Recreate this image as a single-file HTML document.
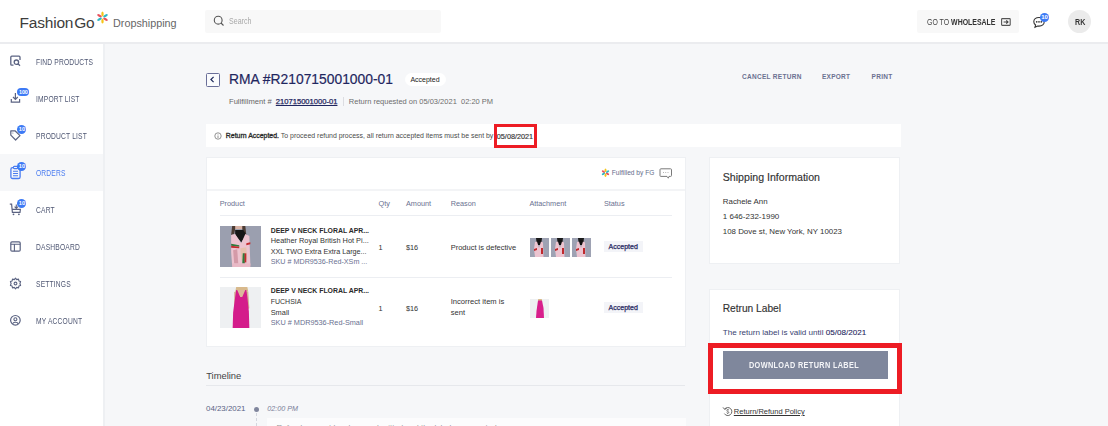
<!DOCTYPE html>
<html><head><meta charset="utf-8">
<style>
*{margin:0;padding:0;box-sizing:border-box}
html,body{width:1108px;height:426px;overflow:hidden;background:#f6f7f9;font-family:"Liberation Sans",sans-serif}
.a{position:absolute;white-space:nowrap;line-height:1}
#hdr{position:absolute;left:0;top:0;width:1108px;height:44px;background:#fff;border-bottom:2px solid #ebecef}
#side{position:absolute;left:0;top:44px;width:105px;height:382px;background:#fff;border-right:2px solid #eef0f3}
.nav{color:#4f5773;font-size:8.4px;left:35.5px;transform:scaleX(0.8);transform-origin:0 0;letter-spacing:0.2px}
.ico{position:absolute}
.badge{position:absolute;background:#3d7af5;color:#fff;font-size:6px;font-weight:bold;border-radius:5px;text-align:center;line-height:9px;height:9px}
.card{position:absolute;background:#fff;border:1px solid #eef0f3}
.th{color:#6a7191;font-size:7.3px}
.td{color:#333;font-size:7.3px}
</style></head><body>
<div id="hdr"></div>
<!-- logo -->
<div class="a" style="left:19.5px;top:14.5px;font-size:15.5px;color:#3d3d3d;letter-spacing:-0.2px">Fashion<span style="margin-left:1px">Go</span></div>
<svg class="ico" style="left:96px;top:11px" width="13" height="13" viewBox="0 0 13 13">
<ellipse cx="6.5" cy="3" rx="1.2" ry="2.6" fill="#f5c518"/>
<ellipse cx="6.5" cy="10" rx="1.2" ry="2.6" fill="#f5c518"/>
<ellipse cx="3.5" cy="4.8" rx="1.2" ry="2.6" fill="#e8505b" transform="rotate(-60 3.5 4.8)"/>
<ellipse cx="9.5" cy="8.2" rx="1.2" ry="2.6" fill="#e8505b" transform="rotate(-60 9.5 8.2)"/>
<ellipse cx="9.5" cy="4.8" rx="1.2" ry="2.6" fill="#2fb8c5" transform="rotate(60 9.5 4.8)"/>
<ellipse cx="3.5" cy="8.2" rx="1.2" ry="2.6" fill="#2fb8c5" transform="rotate(60 3.5 8.2)"/>
</svg>
<div class="a" style="left:113px;top:18px;font-size:10.8px;color:#666">Dropshipping</div>
<!-- search -->
<div class="a" style="left:205px;top:10px;width:236px;height:23px;background:#f8f8f8;border-radius:2px"></div>
<svg class="ico" style="left:213px;top:15px" width="12" height="12" viewBox="0 0 12 12"><circle cx="5.2" cy="5.2" r="3.9" fill="none" stroke="#555" stroke-width="1.1"/><path d="M8 8 L10.5 10.5" stroke="#555" stroke-width="1.1"/></svg>
<div class="a" style="left:228.5px;top:17px;font-size:8.6px;color:#a8a8a8;transform:scaleX(0.825);transform-origin:0 0">Search</div>
<!-- wholesale -->
<div class="a" style="left:917px;top:10px;width:102px;height:23px;background:#f8f8f8;border-radius:2px"></div>
<div class="a" style="left:926.8px;top:17.5px;font-size:8.4px;color:#444;transform:scaleX(0.83);transform-origin:0 0">GO TO <b style="color:#333">WHOLESALE</b></div>
<svg class="ico" style="left:1000px;top:17px" width="12" height="10" viewBox="0 0 12 10"><rect x="1.6" y="1.6" width="8.6" height="6.8" rx="0.6" fill="none" stroke="#555" stroke-width="1.1"/><path d="M3.6 5 H8 M6.3 3.4 L8 5 L6.3 6.6" fill="none" stroke="#444" stroke-width="1.1"/></svg>
<!-- chat -->
<svg class="ico" style="left:1032px;top:15px" width="14" height="14" viewBox="0 0 14 14"><path d="M7 2.5 C3.8 2.5 1.8 4.5 1.8 6.8 C1.8 8.2 2.5 9.3 3.6 10 L3 12.2 L5.6 11 C6.1 11.1 6.5 11.1 7 11.1 C10.2 11.1 12.2 9.1 12.2 6.8 C12.2 4.5 10.2 2.5 7 2.5 Z" fill="none" stroke="#333" stroke-width="1.1"/><circle cx="4.7" cy="6.8" r="0.85" fill="#333"/><circle cx="7" cy="6.8" r="0.85" fill="#333"/><circle cx="9.3" cy="6.8" r="0.85" fill="#333"/></svg>
<div class="badge" style="left:1040px;top:12.5px;width:9px">10</div>
<!-- avatar -->
<div class="a" style="left:1068px;top:10px;width:23px;height:23px;border-radius:50%;background:#ebebeb"></div>
<div class="a" style="left:1074.5px;top:18px;font-size:8.4px;font-weight:bold;color:#333;transform:scaleX(0.85);transform-origin:0 0">RK</div>

<!-- sidebar -->
<div id="side"></div>
<div class="a" style="left:0;top:154px;width:103px;height:37px;background:#f6f7f9"></div>
<div class="a nav" style="top:57.7px">FIND PRODUCTS</div>
<div class="a nav" style="top:94.8px">IMPORT LIST</div>
<div class="a nav" style="top:131.9px">PRODUCT LIST</div>
<div class="a nav" style="top:169.0px;color:#4a7cf0">ORDERS</div>
<div class="a nav" style="top:206.1px">CART</div>
<div class="a nav" style="top:243.2px">DASHBOARD</div>
<div class="a nav" style="top:280.3px">SETTINGS</div>
<div class="a nav" style="top:317.4px">MY ACCOUNT</div>


<!-- sidebar icons -->
<svg class="ico" style="left:9px;top:55px" width="13" height="12" viewBox="0 0 13 12">
<path d="M4.5 10.2 H2.8 Q1.8 10.2 1.8 9.2 V2.2 Q1.8 1.2 2.8 1.2 H10 Q11 1.2 11 2.2 V5" fill="none" stroke="#5b6382" stroke-width="1.3"/>
<circle cx="7.4" cy="7.2" r="2.2" fill="none" stroke="#5b6382" stroke-width="1.3"/>
<path d="M9 8.8 L11 10.8" stroke="#5b6382" stroke-width="1.3"/>
</svg>
<svg class="ico" style="left:9px;top:92px" width="13" height="12" viewBox="0 0 13 12">
<path d="M6.4 1 V7.3 M4 5 L6.4 7.4 L8.8 5" fill="none" stroke="#5b6382" stroke-width="1.2"/>
<path d="M2.3 7 V10.2 H10.6 V7" fill="none" stroke="#5b6382" stroke-width="1.2"/>
</svg>
<div class="badge" style="left:17.3px;top:88.3px;width:12px;height:8.2px;line-height:8.2px;border-radius:4.1px;font-size:5.4px;letter-spacing:-0.2px">100</div>
<svg class="ico" style="left:9px;top:129px" width="13" height="12" viewBox="0 0 13 12">
<path d="M1.8 1.8 H6 L11 6.6 L6.6 11 L1.8 6.2 Z" fill="none" stroke="#5b6382" stroke-width="1.2" stroke-linejoin="round"/>
<circle cx="3.9" cy="3.9" r="0.5" fill="#5b6382"/>
</svg>
<div class="badge" style="left:17.3px;top:124.5px;width:9.2px;height:9.2px;line-height:9.2px;font-size:5.6px">10</div>
<svg class="ico" style="left:9px;top:165px" width="13" height="15" viewBox="0 0 13 15">
<rect x="1.9" y="2.6" width="9.2" height="10.9" rx="1.6" fill="none" stroke="#4a7cf0" stroke-width="1.3"/>
<rect x="4.5" y="1.4" width="4" height="2.2" rx="0.6" fill="#f6f7f9" stroke="#4a7cf0" stroke-width="1.1"/>
<path d="M4 6.3 H9 M4 8.5 H9 M4 10.7 H9" stroke="#4a7cf0" stroke-width="1.1"/>
</svg>
<div class="badge" style="left:17.3px;top:161.5px;width:9.2px;height:9.2px;line-height:9.2px;font-size:5.6px">10</div>
<svg class="ico" style="left:9px;top:203px" width="13" height="13" viewBox="0 0 13 13">
<path d="M0.8 1.2 H2.6 L3.4 9.3 H11 L11.4 6.3 H3.2" fill="none" stroke="#5b6382" stroke-width="1.2"/>
<path d="M7.3 1.5 V5.3 M5.6 3.7 L7.3 5.4 L9 3.7" fill="none" stroke="#5b6382" stroke-width="1.1"/>
<circle cx="4.5" cy="11.3" r="0.9" fill="#5b6382"/><circle cx="9.9" cy="11.3" r="0.9" fill="#5b6382"/>
</svg>
<div class="badge" style="left:17.3px;top:199px;width:9.2px;height:9.2px;line-height:9.2px;font-size:5.6px">10</div>
<svg class="ico" style="left:9px;top:240px" width="13" height="13" viewBox="0 0 13 13">
<rect x="1.8" y="1.8" width="9.4" height="9.4" rx="1.2" fill="none" stroke="#5b6382" stroke-width="1.2"/>
<path d="M1.8 4.3 H11.2 M5.4 4.3 V11.2" stroke="#5b6382" stroke-width="1.1"/>
</svg>
<svg class="ico" style="left:9px;top:277px" width="13" height="13" viewBox="0 0 13 13">
<path d="M6.5 1.2 L7.7 2.6 L9.5 2.1 L9.9 3.9 L11.6 4.6 L10.9 6.5 L11.6 8.4 L9.9 9.1 L9.5 10.9 L7.7 10.4 L6.5 11.8 L5.3 10.4 L3.5 10.9 L3.1 9.1 L1.4 8.4 L2.1 6.5 L1.4 4.6 L3.1 3.9 L3.5 2.1 L5.3 2.6 Z" fill="none" stroke="#5b6382" stroke-width="1.1" stroke-linejoin="round"/>
<circle cx="6.5" cy="6.5" r="1.4" fill="none" stroke="#5b6382" stroke-width="1.1"/>
</svg>
<svg class="ico" style="left:9px;top:314px" width="13" height="13" viewBox="0 0 13 13">
<circle cx="6.4" cy="6.3" r="4.8" fill="none" stroke="#5b6382" stroke-width="1.2"/>
<circle cx="6.4" cy="5.2" r="1.5" fill="none" stroke="#5b6382" stroke-width="1.1"/>
<path d="M3.6 10 Q4 8.2 6.4 8.2 Q8.8 8.2 9.2 10" fill="none" stroke="#5b6382" stroke-width="1.1"/>
</svg>

<!-- main header -->
<div class="a" style="left:205.5px;top:72.5px;width:14px;height:14px;border:1px solid #6a6f99;border-radius:1.5px;background:#fafbfd"></div>
<svg class="ico" style="left:206px;top:73px" width="13" height="13" viewBox="0 0 13 13"><path d="M7.6 3.8 L4.9 6.5 L7.6 9.2" fill="none" stroke="#1f2a5c" stroke-width="1.2"/></svg>
<div class="a" style="left:229px;top:73px;font-size:13.85px;color:#1f2660;-webkit-text-stroke:0.18px #1f2660">RMA #R210715001000-01</div>
<div class="a" style="left:404.5px;top:73px;width:41px;height:13px;border-radius:6.5px;background:#fff"></div>
<div class="a" style="left:410.4px;top:76px;font-size:7px;color:#222">Accepted</div>
<div class="a" style="left:229px;top:97.5px;font-size:7.6px;color:#666">Fullfillment #</div><div class="a" style="left:275.8px;top:97.5px;font-size:7.6px;color:#1f2660;text-decoration:underline;-webkit-text-stroke:0.25px #1f2660">210715001000-01</div><div class="a" style="left:343px;top:96.5px;width:0.8px;height:9px;background:#dcdde2"></div><div class="a" style="left:348.8px;top:97.5px;font-size:7.5px;color:#6e6e6e">Return requested on 05/03/2021&nbsp; 02:20 PM</div>
<div class="a" style="left:742px;top:74px;font-size:6.5px;font-weight:bold;color:#6b7191;letter-spacing:0.3px">CANCEL RETURN</div>
<div class="a" style="left:822px;top:74px;font-size:6.5px;font-weight:bold;color:#6b7191;letter-spacing:0.25px">EXPORT</div>
<div class="a" style="left:871.5px;top:74px;font-size:6.5px;font-weight:bold;color:#6b7191;letter-spacing:0.3px">PRINT</div>

<!-- alert -->
<div class="a" style="left:206px;top:124px;width:695px;height:23px;background:#fff"></div>
<svg class="ico" style="left:214px;top:132px" width="8" height="8" viewBox="0 0 8 8"><circle cx="4" cy="4" r="3.2" fill="none" stroke="#777" stroke-width="0.8"/><path d="M4 3.5 V6" stroke="#777" stroke-width="0.8"/><circle cx="4" cy="2.4" r="0.45" fill="#777"/></svg>
<div class="a" style="left:225.8px;top:133px;font-size:6.94px;color:#4a4a4a"><span style="color:#2a2a2a;-webkit-text-stroke:0.3px #2a2a2a">Return Accepted.</span> To proceed refund process, all return accepted items must be sent by</div><div class="a" style="left:496.8px;top:132.5px;font-size:7.25px;color:#333;-webkit-text-stroke:0.15px #333">05/08/2021</div>
<div class="a" style="left:494px;top:124px;width:43px;height:24px;border:3px solid #ed1c24"></div>


<!-- table card -->
<div class="card" style="left:206px;top:157px;width:480px;height:190px"></div>
<div class="a" style="left:207px;top:189px;width:478px;height:1.5px;background:#f3f4f6"></div>
<svg class="ico" style="left:600.5px;top:168.3px" width="9" height="9.5" viewBox="0 0 13 13">
<ellipse cx="6.5" cy="3" rx="1.4" ry="2.6" fill="#f5c518"/>
<ellipse cx="6.5" cy="10" rx="1.4" ry="2.6" fill="#f5c518"/>
<ellipse cx="3.5" cy="4.8" rx="1.4" ry="2.6" fill="#e8505b" transform="rotate(-60 3.5 4.8)"/>
<ellipse cx="9.5" cy="8.2" rx="1.4" ry="2.6" fill="#e8505b" transform="rotate(-60 9.5 8.2)"/>
<ellipse cx="9.5" cy="4.8" rx="1.4" ry="2.6" fill="#2fb8c5" transform="rotate(60 9.5 4.8)"/>
<ellipse cx="3.5" cy="8.2" rx="1.4" ry="2.6" fill="#2fb8c5" transform="rotate(60 3.5 8.2)"/>
</svg>
<div class="a" style="left:611.8px;top:170px;font-size:6.6px;color:#666d8a">Fulfilled by FG</div>
<svg class="ico" style="left:658px;top:167px" width="15" height="13" viewBox="0 0 15 13"><path d="M2.8 1.8 H12.6 Q13.5 1.8 13.5 2.7 V8.6 Q13.5 9.4 12.6 9.4 H11 L10.3 11.2 L9 9.4 H2.8 Q2 9.4 2 8.6 V2.7 Q2 1.8 2.8 1.8 Z" fill="none" stroke="#7a7a7a" stroke-width="1"/><circle cx="5.6" cy="5.4" r="0.45" fill="#555"/><circle cx="7.8" cy="5.4" r="0.45" fill="#555"/><circle cx="10" cy="5.4" r="0.45" fill="#555"/></svg>

<div class="a th" style="left:219.7px;top:200px">Product</div>
<div class="a th" style="left:378.6px;top:200px">Qty</div>
<div class="a th" style="left:406px;top:200px">Amount</div>
<div class="a th" style="left:450.7px;top:200px">Reason</div>
<div class="a th" style="left:529.4px;top:200px">Attachment</div>
<div class="a th" style="left:603.9px;top:200px">Status</div>
<div class="a" style="left:219.5px;top:215px;width:452px;height:1px;background:#eceef2"></div>
<div class="a" style="left:219.5px;top:276.5px;width:452px;height:1px;background:#eceef2"></div>

<!-- row1 -->
<svg class="ico" style="left:219.5px;top:225.5px" width="41.5" height="41.5" viewBox="0 0 41 41">
<defs><filter id="bl" x="-10%" y="-10%" width="120%" height="120%"><feGaussianBlur stdDeviation="0.5"/></filter></defs>
<rect width="41" height="41" fill="#9b9faf"/>
<g filter="url(#bl)">
<path d="M12 0 H25 L26 9 L23 8 L22 3 H15 L14 8 L11 9 Z" fill="#4b3a33"/>
<rect x="15" y="0" width="7" height="3" fill="#d9b3a5"/>
<path d="M15 4 H23 L26 9 L21 16 L15 9 Z" fill="#141414"/>
<path d="M11 9 L15 8 L21 17 L25 8 L29 10 L30 39 L12 39 L11 26 Z" fill="#ecc3cf"/>
<path d="M13 24 L17 23 L18 37 L14 37 Z" fill="#d49aa8"/>
<path d="M11 17.5 L19 19 L19 20.5 L11 19.5 Z" fill="#2e7b3c"/>
<path d="M11 19.5 L19 20.5 L19 22 L11 21.5 Z" fill="#c42a2e"/>
<path d="M26 17 L30 16 L30 18 L26 19 Z" fill="#c42a2e"/>
<path d="M20 22 L26 21 L27 33 L21 34 Z" fill="#e6c0ad"/>
<path d="M22.5 27 L24.5 27 L24.5 37 L22 37 Z" fill="#2e7b3c"/>
<path d="M24.3 27 L26 27 L26 36 L24.3 36 Z" fill="#c42a2e"/>
<rect x="12" y="37" width="18" height="4" fill="#e9b9c6"/>
</g>
</svg>
<div class="a td" style="left:270.7px;top:228px;font-weight:bold;color:#2a2a2a;font-size:6.9px">DEEP V NECK FLORAL APR...</div>
<div class="a td" style="left:270.7px;top:237px;font-size:7.4px">Heather Royal British Hot Pi...</div>
<div class="a td" style="left:270.7px;top:248px;font-size:7.2px">XXL TWO Extra Extra Large...</div>
<div class="a td" style="left:270.7px;top:258px;color:#6a7191;font-size:7.2px">SKU # MDR9536-Red-XSm ...</div>
<div class="a td" style="left:378.6px;top:244px">1</div>
<div class="a td" style="left:406px;top:244px">$16</div>
<div class="a td" style="left:450.7px;top:243.5px;font-size:7.5px">Product is defective</div>
<svg class="ico" style="left:529.5px;top:237.5px" width="19" height="19" viewBox="0 0 19 19" id="th1">
<rect width="19" height="19" fill="#9ea2b3"/>
<path d="M6 0 H12 L11.5 4 H6.5 Z" fill="#1a1a1a"/>
<path d="M6.5 3 Q9 1 11.5 3 L11 7 H7 Z" fill="#111"/>
<path d="M5 4 L7 3.5 L9 10 L11 3.5 L13 4.5 L13.5 19 L5 19 L4 11 Z" fill="#ecc4d0"/>
<path d="M4 11 L7 10 L7 12 L4 13 Z" fill="#c0282d"/>
<path d="M11 10 L13 10 L13 16 L11 16 Z" fill="#c0282d"/>
</svg>
<svg class="ico" style="left:550.5px;top:237.5px" width="19" height="19" viewBox="0 0 19 19"><use href="#th1"/>
<rect width="19" height="19" fill="#9ea2b3"/>
<path d="M6 0 H12 L11.5 4 H6.5 Z" fill="#1a1a1a"/>
<path d="M6.5 3 Q9 1 11.5 3 L11 7 H7 Z" fill="#111"/>
<path d="M5 4 L7 3.5 L9 10 L11 3.5 L13 4.5 L13.5 19 L5 19 L4 11 Z" fill="#ecc4d0"/>
<path d="M4 11 L7 10 L7 12 L4 13 Z" fill="#c0282d"/>
<path d="M11 10 L13 10 L13 16 L11 16 Z" fill="#c0282d"/>
</svg>
<svg class="ico" style="left:571.5px;top:237.5px" width="19" height="19" viewBox="0 0 19 19">
<rect width="19" height="19" fill="#9ea2b3"/>
<path d="M6 0 H12 L11.5 4 H6.5 Z" fill="#1a1a1a"/>
<path d="M6.5 3 Q9 1 11.5 3 L11 7 H7 Z" fill="#111"/>
<path d="M5 4 L7 3.5 L9 10 L11 3.5 L13 4.5 L13.5 19 L5 19 L4 11 Z" fill="#ecc4d0"/>
<path d="M4 11 L7 10 L7 12 L4 13 Z" fill="#c0282d"/>
<path d="M11 10 L13 10 L13 16 L11 16 Z" fill="#c0282d"/>
</svg>
<div class="a" style="left:603.6px;top:241px;width:39.6px;height:10.5px;background:#f3f4f8"></div>
<div class="a" style="left:608.6px;top:243px;font-size:7px;color:#1f2660;-webkit-text-stroke:0.25px #1f2660">Accepted</div>

<!-- row2 -->
<svg class="ico" style="left:219.5px;top:286.5px" width="41.5" height="41.5" viewBox="0 0 41 41">
<rect width="41" height="41" fill="#eef0f2"/>
<g filter="url(#bl)">
<path d="M16 0 H27 L28 5 L25 4 L18 4 L15 5 Z" fill="#d8b98c"/><rect x="16" y="3" width="10" height="8" fill="#dcb89c"/>
<path d="M14 5 L17 4 L16 20 L14 21 Z" fill="#d4b095"/>
<path d="M25 4 L28 5 L29 21 L27 22 Z" fill="#d4b095"/>
<path d="M16 3 L17 3 L20 10 L22 10 L25 3 L26 3 L27 10 L28.5 24 L29 41 L12.5 41 L13 25 L15 10 Z" fill="#d41a8b"/>
</g>
</svg>
<div class="a td" style="left:270.7px;top:288px;font-weight:bold;color:#2a2a2a;font-size:6.9px">DEEP V NECK FLORAL APR...</div>
<div class="a td" style="left:270.7px;top:298px;font-size:7px">FUCHSIA</div>
<div class="a td" style="left:270.7px;top:308.5px;font-size:7.4px">Small</div>
<div class="a td" style="left:270.7px;top:318.5px;color:#6a7191">SKU # MDR9536-Red-Small</div>
<div class="a td" style="left:378.6px;top:305px">1</div>
<div class="a td" style="left:406px;top:305px">$16</div>
<div class="a td" style="left:450.7px;top:298px;font-size:7.6px">Incorrect item is</div>
<div class="a td" style="left:450.7px;top:308.5px;font-size:7.6px">sent</div>
<svg class="ico" style="left:529.5px;top:298.5px" width="19" height="19" viewBox="0 0 19 19">
<rect width="19" height="19" fill="#eef0f2"/>
<ellipse cx="10" cy="1" rx="2" ry="1.5" fill="#d9b98a"/>
<path d="M8 1.5 L12 1.5 L13.5 9 L14 19 L6 19 L6.5 12 Z" fill="#d81f8c"/>
</svg>
<div class="a" style="left:603.6px;top:302px;width:39.6px;height:10.5px;background:#f3f4f8"></div>
<div class="a" style="left:608.6px;top:304px;font-size:7px;color:#1f2660;-webkit-text-stroke:0.25px #1f2660">Accepted</div>

<!-- shipping card -->
<div class="card" style="left:709px;top:157px;width:191px;height:107px"></div>
<div class="a" style="left:722.8px;top:172px;font-size:10.6px;color:#333;-webkit-text-stroke:0.15px #333">Shipping Information</div>
<div class="a" style="left:722.8px;top:197.5px;font-size:7.9px;color:#333">Rachele Ann</div>
<div class="a" style="left:722.8px;top:212.5px;font-size:8px;color:#333">1 646-232-1990</div>
<div class="a" style="left:722.8px;top:227.5px;font-size:7.9px;color:#333">108 Dove st, New York, NY 10023</div>

<!-- return label card -->
<div class="card" style="left:709px;top:288.5px;width:191px;height:150px"></div>
<div class="a" style="left:722.7px;top:303.5px;font-size:10.2px;color:#333;-webkit-text-stroke:0.15px #333">Retrun Label</div>
<div class="a" style="left:722.7px;top:329px;font-size:8.1px;color:#3a3f70">The return label is valid until <span style="color:#1f2660;-webkit-text-stroke:0.1px #1f2660">05/08/2021</span></div>
<div class="a" style="left:722.5px;top:351px;width:165px;height:28px;background:#7f879c"></div>
<div class="a" style="left:748.7px;top:360.5px;font-size:8.3px;font-weight:bold;color:#f4f5f8;letter-spacing:0.4px;transform:scaleX(0.88);transform-origin:0 0">DOWNLOAD RETURN LABEL</div>
<div class="a" style="left:708px;top:343px;width:194px;height:51px;border:5px solid #ed1c24"></div>
<svg class="ico" style="left:721.5px;top:406px" width="11" height="11" viewBox="0 0 11 11"><path d="M2.6 3.2 A4 4 0 1 1 2.4 7.6" fill="none" stroke="#555" stroke-width="0.9"/><path d="M1 1.4 L2.6 3.2 L4.6 2.6" fill="none" stroke="#555" stroke-width="0.9"/><path d="M7 4.3 Q6.5 3.7 5.7 3.8 Q4.7 4 4.8 4.8 Q5 5.4 5.8 5.5 Q6.8 5.7 6.8 6.4 Q6.7 7.2 5.6 7.1 Q4.9 7 4.6 6.5 M5.8 3 V3.8 M5.7 7.1 V8" fill="none" stroke="#555" stroke-width="0.75"/></svg>
<div class="a" style="left:733.8px;top:408px;font-size:7.5px;color:#333;text-decoration:underline">Return/Refund Policy</div>

<!-- timeline -->
<div class="a" style="left:206.2px;top:371px;font-size:9.4px;color:#444">Timeline</div>
<div class="a" style="left:206px;top:384.5px;width:479px;height:1px;background:#e6e8ec"></div>
<div class="a" style="left:206px;top:405px;font-size:7.9px;color:#5a6385">04/23/2021</div>
<div class="a" style="left:254.2px;top:406.7px;width:5px;height:5px;border-radius:50%;background:#80869d"></div>
<div class="a" style="left:256.2px;top:413px;width:0;height:13px;border-left:1px dashed #d3d6de"></div>
<div class="a" style="left:267.3px;top:405px;font-size:7.2px;font-style:italic;color:#7a8099">02:00 PM</div>
<div class="a" style="left:266.5px;top:418px;width:419px;height:10px;background:#fcfcfd;overflow:hidden"><div class="a" style="left:10px;top:5.5px;font-size:8px;color:#9a9a9a">Refund request has been submitted and the label was created</div></div>

</body></html>
